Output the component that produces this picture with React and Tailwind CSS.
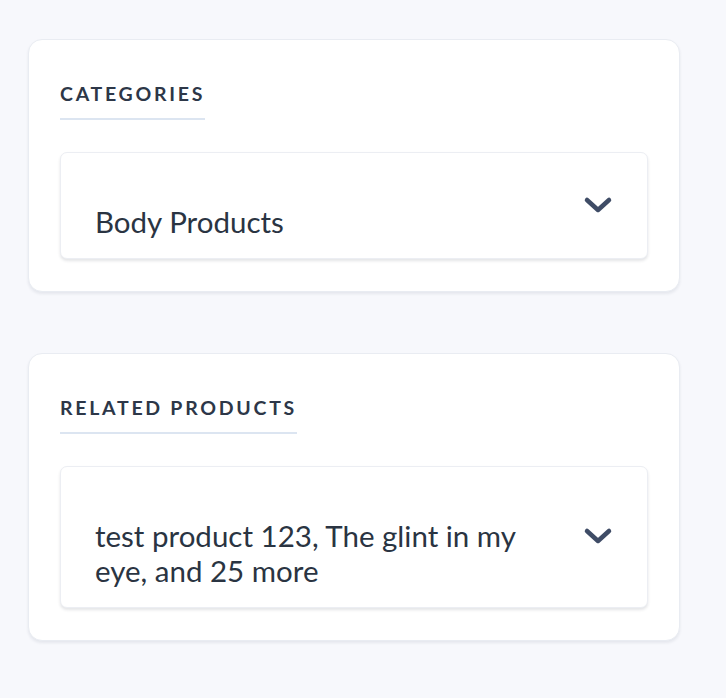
function Panel({ title, value }) {
    return (
        <div className="bg-white rounded-[14px] border border-[#e9ecf2] shadow-[0_2px_3px_rgba(30,41,59,0.08)] px-[31px] pt-[40px] pb-[32px]">
            <h2 className="inline-block text-[19.5px] leading-[28px] font-bold tracking-[0.14em] uppercase text-[#2d3748] pb-[10px] border-b-2 border-[#dce5f1]">
                {title}
            </h2>
            <div className="mt-[32px] flex items-center justify-between bg-white rounded-[7px] border border-[#eceef3] shadow-[0_2px_3px_rgba(30,41,59,0.12)] pl-[34px] pr-[34px] pt-[51px] pb-[19px] relative">
                <span className="text-[29.5px] leading-[35px] text-[#2a3442] max-w-[450px]">{value}</span>
                <div className="absolute right-[34px] top-1/2 -translate-y-1/2">
                    <svg width="30" height="20" viewBox="0 0 30 20" fill="none">
                        <path d="M4 4 L15 14 L26 4" stroke="#3f4c66" strokeWidth="4.5" strokeLinecap="round" strokeLinejoin="round" />
                    </svg>
                </div>
            </div>
        </div>
    );
}

export default function App() {
    return (
        <div className="min-h-[698px] bg-[#f7f8fc] font-['Lato','Liberation_Sans',sans-serif] pt-[39px]">
            <div className="ml-[28px] w-[652px] space-y-[61px]">
                <Panel title="Categories" value="Body Products" />
                <Panel title="Related Products" value="test product 123, The glint in my eye, and 25 more" />
            </div>
        </div>
    );
}
